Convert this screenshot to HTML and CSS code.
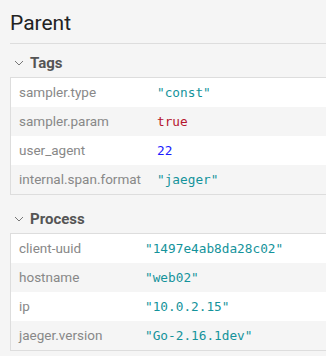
FILE: index.html
```html
<!DOCTYPE html>
<html lang="en">
<head>
  <meta charset="UTF-8" />
  <title>Parent</title>
  <link rel="stylesheet" href="styles.css">
</head>
<body>
  <div class="detail">
    <h2 class="title">Parent</h2>

    <div class="section">
      <div class="section-head">
        <svg class="chevron" width="10" height="6" viewBox="0 0 10 6"><path d="M1 1l4 4 4-4" fill="none" stroke="#777" stroke-width="1"/></svg>
        <span>Tags</span>
      </div>
      <table class="kv">
        <tr><td class="key">sampler.type</td><td class="val str">"const"</td></tr>
        <tr><td class="key">sampler.param</td><td class="val bool">true</td></tr>
        <tr><td class="key">user_agent</td><td class="val num">22</td></tr>
        <tr><td class="key">internal.span.format</td><td class="val str">"jaeger"</td></tr>
      </table>
    </div>

    <div class="section">
      <div class="section-head">
        <svg class="chevron" width="10" height="6" viewBox="0 0 10 6"><path d="M1 1l4 4 4-4" fill="none" stroke="#777" stroke-width="1"/></svg>
        <span>Process</span>
      </div>
      <table class="kv">
        <tr><td class="key">client-uuid</td><td class="val str">"1497e4ab8da28c02"</td></tr>
        <tr><td class="key">hostname</td><td class="val str">"web02"</td></tr>
        <tr><td class="key">ip</td><td class="val str">"10.0.2.15"</td></tr>
        <tr><td class="key">jaeger.version</td><td class="val str">"Go-2.16.1dev"</td></tr>
      </table>
    </div>
  </div>
</body>
</html>
```

FILE: styles.css
```css
html, body { margin: 0; background: #f5f5f5; overflow: hidden; }
body { font-family: Roboto, "Liberation Sans", sans-serif; color: #333; }
.detail { padding: 0 0 0 10px; width: 340px; }
.title {
  margin: 0; padding: 12px 0 8px; font-size: 21px; font-weight: 400;
  color: #222; border-bottom: 1px solid #ddd; line-height: 23px;
}
.section + .section { margin-top: 5px; }
.section-head {
  display: flex; align-items: center; gap: 6px;
  padding: 10px 0 5px 4px; font-size: 15px; font-weight: 700; color: #555;
}
.chevron { display: block; }
.kv { width: 100%; border-collapse: collapse; border: 1px solid #ddd; background: #fff; font-size: 13.5px; }
.kv tr:nth-child(even) { background: #f5f5f5; }
.kv td { padding: 4px 8px; line-height: 21px; white-space: nowrap; }
.key { color: #888; width: 110px; }
.val { font-family: "DejaVu Sans Mono", monospace; font-size: 12.75px; }
.str { color: #14939b; }
.bool { color: #b5152e; }
.num { color: #1a1aff; }
```
